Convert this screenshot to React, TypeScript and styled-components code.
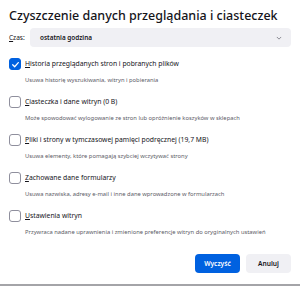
import styled, { createGlobalStyle } from 'styled-components';

const GlobalStyle = createGlobalStyle`
  html, body {
    margin: 0;
    padding: 0;
    background: #fff;
  }
  body {
    font-family: 'Noto Sans', 'Open Sans', sans-serif;
    color: #15141a;
  }
`;

const Dialog = styled.div`
  width: 300px;
  height: 286px;
  box-sizing: border-box;
  background: #fff;
  display: flex;
  flex-direction: column;
  padding: 6px 9px 0 9px;
  border-bottom: 2px solid #a4a4a8;
  overflow: hidden;
`;

const Title = styled.h1`
  margin: 0;
  font-size: 12.5px;
  font-weight: 500;
  line-height: 20px;
  white-space: nowrap;
`;

const TimeRow = styled.div`
  display: flex;
  align-items: center;
  gap: 5px;
  margin-top: 2px;
`;

const TimeLabel = styled.label`
  font-size: 6.5px;
  width: 16px;
`;

const Select = styled.div`
  flex: 1;
  height: 19px;
  border-radius: 4px;
  background: #f0f0f4;
  display: flex;
  align-items: center;
  justify-content: space-between;
  padding: 0 9px 0 10px;
  font-size: 6.4px;
  font-weight: 600;
`;

const Options = styled.div`
  display: flex;
  flex-direction: column;
  gap: 12px;
  margin-top: 11px;
`;

const Option = styled.div`
  display: flex;
  flex-direction: column;
`;

const Head = styled.div`
  display: flex;
  align-items: center;
  gap: 4px;
  height: 12px;
`;

const Box = styled.span<{ $checked?: boolean }>`
  width: 12px;
  height: 12px;
  box-sizing: border-box;
  border-radius: 3px;
  border: 1px solid ${(p) => (p.$checked ? '#0061e0' : '#8f8f9d')};
  background: ${(p) => (p.$checked ? '#0061e0' : '#fff')};
  display: flex;
  align-items: center;
  justify-content: center;
`;

const Label = styled.span`
  font-size: 6.8px;
  line-height: 12px;
  white-space: nowrap;
`;

const Desc = styled.span`
  margin: 6px 0 0 16px;
  font-size: 5.8px;
  color: #5b5b66;
  line-height: 8px;
  white-space: nowrap;
`;

const Footer = styled.div`
  display: flex;
  justify-content: flex-end;
  gap: 6px;
  margin-top: auto;
  margin-bottom: 11px;
`;

const Button = styled.button<{ $primary?: boolean }>`
  width: 45px;
  height: 19px;
  border: none;
  border-radius: 4px;
  font-family: inherit;
  font-size: 6.6px;
  font-weight: 600;
  background: ${(p) => (p.$primary ? '#0061e0' : '#f0f0f4')};
  color: ${(p) => (p.$primary ? '#fff' : '#15141a')};
  padding: 0;
`;

const options = [
  {
    key: 'H',
    rest: 'istoria przeglądanych stron i pobranych plików',
    desc: 'Usuwa historię wyszukiwania, witryn i pobierania',
    checked: true,
  },
  {
    key: 'C',
    rest: 'iasteczka i dane witryn (0 B)',
    desc: 'Może spowodować wylogowanie ze stron lub opróżnienie koszyków w sklepach',
  },
  {
    key: 'P',
    rest: 'liki i strony w tymczasowej pamięci podręcznej (19,7 MB)',
    desc: 'Usuwa elementy, które pomagają szybciej wczytywać strony',
  },
  {
    key: 'Z',
    rest: 'achowane dane formularzy',
    desc: 'Usuwa nazwiska, adresy e-mail i inne dane wprowadzone w formularzach',
  },
  {
    key: 'U',
    rest: 'stawienia witryn',
    desc: 'Przywraca nadane uprawnienia i zmienione preferencje witryn do oryginalnych ustawień',
  },
];

const Check = () => (
  <svg width="9" height="9" viewBox="0 0 16 16">
    <path d="M3 8.5 L6.5 12 L13 4.5" fill="none" stroke="#fff" strokeWidth="2.2" strokeLinecap="round" strokeLinejoin="round" />
  </svg>
);

const Chevron = () => (
  <svg width="6" height="6" viewBox="0 0 16 16">
    <path d="M3 6 L8 11 L13 6" fill="none" stroke="#5b5b66" strokeWidth="1.8" strokeLinecap="round" strokeLinejoin="round" />
  </svg>
);

export default function App() {
  return (
    <>
      <GlobalStyle />
      <Dialog>
        <Title>Czyszczenie danych przeglądania i ciasteczek</Title>
        <TimeRow>
          <TimeLabel>
            <u>C</u>zas:
          </TimeLabel>
          <Select>
            <span>ostatnia godzina</span>
            <Chevron />
          </Select>
        </TimeRow>
        <Options>
          {options.map((o) => (
            <Option key={o.key}>
              <Head>
                <Box $checked={o.checked}>{o.checked && <Check />}</Box>
                <Label>
                  <u>{o.key}</u>
                  {o.rest}
                </Label>
              </Head>
              <Desc>{o.desc}</Desc>
            </Option>
          ))}
        </Options>
        <Footer>
          <Button $primary>Wyczyść</Button>
          <Button>Anuluj</Button>
        </Footer>
      </Dialog>
    </>
  );
}
